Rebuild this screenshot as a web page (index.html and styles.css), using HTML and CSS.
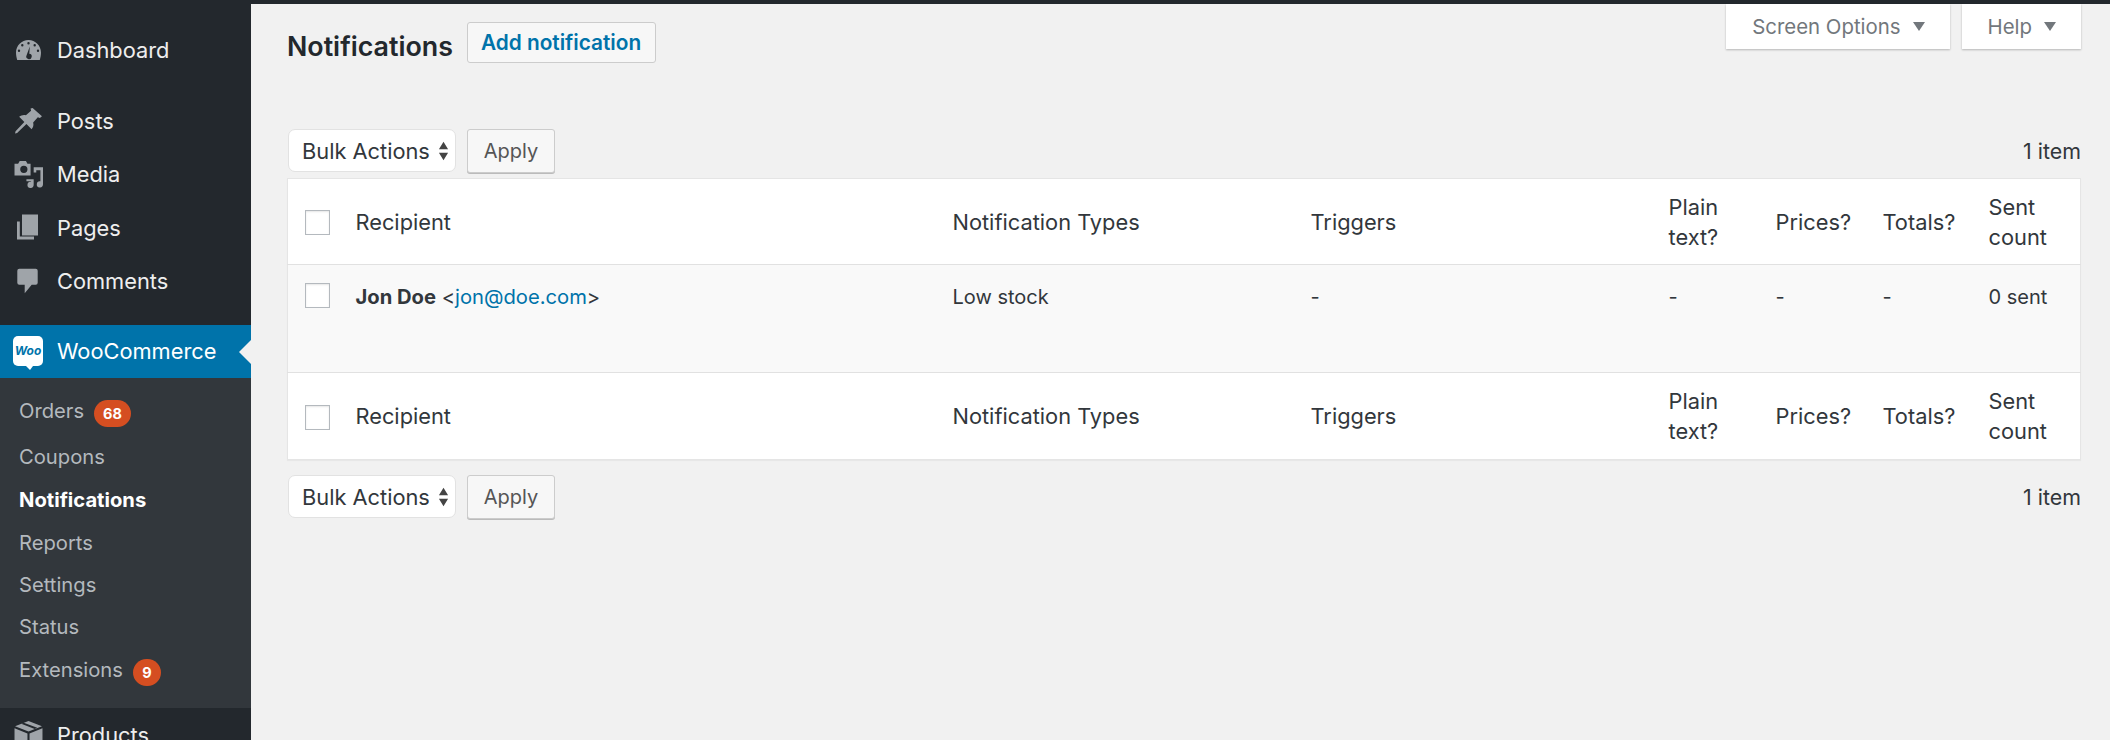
FILE: index.html
```html
<!DOCTYPE html>
<html lang="en">
<head>
<meta charset="utf-8">
<title>Notifications</title>
<link rel="stylesheet" href="styles.css">
</head>
<body>
<div class="topbar"></div>
<div class="layout">
  <nav class="sidebar">
    <a class="menu-item first">
      <svg class="icon" viewBox="0 0 29 29"><path fill-rule="evenodd" d="M14.500 5C7.600 5 2 10.600 2 17.500c0 2.600.6 5.500 1.200 7.500h22.600c.6-2 1.200-4.900 1.200-7.500C27 10.600 21.400 5 14.500 5zM14.500 7a1.200 1.200 0 1 1 0 2.400 1.200 1.200 0 0 1 0-2.400zM8.300 9a1.200 1.200 0 1 1 0 2.400 1.200 1.200 0 0 1 0-2.400zM20.700 9a1.200 1.200 0 1 1 0 2.400 1.200 1.200 0 0 1 0-2.400zM5 14.500a1.200 1.200 0 1 1 0 2.400 1.200 1.200 0 0 1 0-2.400zM24 14.500a1.200 1.200 0 1 1 0 2.400 1.200 1.200 0 0 1 0-2.400zM15.800 11.500l-.5 7.300a2.700 2.700 0 1 1-2.700 1.500z"/></svg>
      <span>Dashboard</span>
    </a>
    <a class="menu-item group">
      <svg class="icon" viewBox="0 0 28 28"><path d="M18 1l9 8-2 1.500-2-.5-4.500 5c.7 2.500 0 4.700-1.500 6.500l-5-5-9 8.500-2 .5.500-2 8.500-9-5-5c2-1.500 4.200-2.200 6.500-1.500l5-4.500-.5-2z"/></svg>
      <span>Posts</span>
    </a>
    <a class="menu-item">
      <svg class="icon" viewBox="0 0 28 28"><path fill-rule="evenodd" d="M5.500 1h6l1.500 2.500h3v11.500H0.500V3.500h3.500zM9.500 5.500a3.500 3.500 0 1 0 0 7 3.500 3.500 0 0 0 0-7zM19 7h9v16.500a3 3 0 1 1-2.500-3V10h-4v2H19zM12 18.500h7v5.500a3 3 0 1 1-2.500-3v-.5h-4.500z"/></svg>
      <span>Media</span>
    </a>
    <a class="menu-item">
      <svg class="icon" viewBox="0 0 29 29"><path d="M8 1.500h16v21H8zM3 8.500h2.800v15H20v3H3z"/></svg>
      <span>Pages</span>
    </a>
    <a class="menu-item">
      <svg class="icon" viewBox="0 0 29 29"><path d="M5.300 1.800h16.400a2 2 0 0 1 2 2v12a2 2 0 0 1-2 2h-4l-7 8.500v-8.500H5.300a2 2 0 0 1-2-2v-12a2 2 0 0 1 2-2z"/></svg>
      <span>Comments</span>
    </a>
    <a class="menu-item current">
      <span class="woo-logo">Woo</span>
      <span>WooCommerce</span>
    </a>
    <ul class="submenu">
      <li class="orders">Orders <span class="badge">68</span></li>
      <li class="coupons">Coupons</li>
      <li class="active">Notifications</li>
      <li>Reports</li>
      <li>Settings</li>
      <li>Status</li>
      <li>Extensions <span class="badge">9</span></li>
    </ul>
    <a class="menu-item products">
      <svg class="icon" viewBox="0 0 28 28"><path fill-rule="evenodd" d="M14 1l13 5-13 5L1 6zM.500 8l12.500 5v14L.500 22zM27.500 8v14L15 27V13z"/><path class="box-tape" d="M7 3.600l13 5 2.400-1-13-5z"/></svg>
      <span>Products</span>
    </a>
  </nav>
  <main class="content">
    <header class="page-head">
      <div class="title-wrap">
        <h1>Notifications</h1>
        <a class="add-btn">Add notification</a>
      </div>
      <div class="tabs">
        <div class="tab">Screen Options <i class="caret"></i></div>
        <div class="tab">Help <i class="caret"></i></div>
      </div>
    </header>

    <div class="tablenav top">
      <div class="bulk">Bulk Actions
        <svg class="updown" viewBox="0 0 12 20"><path d="M6 0l5 8H1zM6 20l-5-8h10z"/></svg>
      </div>
      <button class="apply">Apply</button>
      <span class="count">1 item</span>
    </div>

    <table class="list">
      <colgroup>
        <col class="c-check"><col class="c-recipient"><col class="c-types"><col class="c-triggers"><col class="c-plain"><col class="c-prices"><col class="c-totals"><col class="c-sent">
      </colgroup>
      <thead>
        <tr>
          <td class="check"><input type="checkbox"></td>
          <th>Recipient</th><th>Notification Types</th><th>Triggers</th><th>Plain text?</th><th>Prices?</th><th>Totals?</th><th>Sent count</th>
        </tr>
      </thead>
      <tbody>
        <tr>
          <td class="check"><input type="checkbox"></td>
          <td class="recipient"><strong>Jon Doe</strong> &lt;<a class="link">jon@doe.com</a>&gt;</td>
          <td>Low stock</td><td>-</td><td>-</td><td>-</td><td>-</td><td>0 sent</td>
        </tr>
      </tbody>
      <tfoot>
        <tr>
          <td class="check"><input type="checkbox"></td>
          <th>Recipient</th><th>Notification Types</th><th>Triggers</th><th>Plain text?</th><th>Prices?</th><th>Totals?</th><th>Sent count</th>
        </tr>
      </tfoot>
    </table>

    <div class="tablenav bottom">
      <div class="bulk">Bulk Actions
        <svg class="updown" viewBox="0 0 12 20"><path d="M6 0l5 8H1zM6 20l-5-8h10z"/></svg>
      </div>
      <button class="apply">Apply</button>
      <span class="count">1 item</span>
    </div>
  </main>
</div>
</body>
</html>
```
FILE: styles.css
```css
* { box-sizing: border-box; }
html, body { margin: 0; height: 740px; overflow: hidden; }
body {
  background: #f1f1f1;
  color: #32373c;
  font-family: Inter, "Liberation Sans", sans-serif;
  font-size: 20px;
}
.topbar { height: 4px; background: #23282d; }
.layout { display: flex; height: 736px; }

.sidebar {
  width: 251px;
  flex: none;
  background: #23282d;
  color: #eee;
  display: flex;
  flex-direction: column;
  overflow: hidden;
}
.menu-item {
  display: flex;
  align-items: center;
  height: 53.4px;
  flex: none;
  gap: 14px;
  padding-left: 14px;
  font-size: 21.8px;
  position: relative;
}
.menu-item.first { margin-top: 19px; }
.menu-item.group { margin-top: 18px; }
.icon { width: 29px; height: 29px; fill: #9fa4a9; flex: none; }
.box-tape { fill: #23282d; }
.menu-item.current {
  height: 53px;
  margin-top: 17px;
  background: #0073aa;
  color: #fff;
}
.menu-item.current::after {
  content: "";
  position: absolute;
  right: 0;
  top: 15px;
  border: 12px solid transparent;
  border-left-width: 0;
  border-right-color: #f1f1f1;
}
.woo-logo {
  width: 30px;
  height: 30px;
  margin: 0 0 0 -1px;
  flex: none;
  background: #fff;
  border-radius: 5px;
  color: #0073aa;
  font-size: 12px;
  font-weight: 700;
  font-style: italic;
  line-height: 29px;
  text-align: center;
  position: relative;
}
.woo-logo::after {
  content: "";
  position: absolute;
  left: 13px;
  bottom: -4px;
  border: 3px solid transparent;
  border-top: 4px solid #fff;
  border-bottom-width: 0;
  border-left-width: 4px;
}
.submenu {
  list-style: none;
  margin: 0;
  padding: 10px 0 17.5px 19px;
  background: #32373c;
  color: #b4b9be;
  font-size: 20.2px;
  flex: none;
}
.submenu li {
  height: 42.4px;
  display: flex;
  align-items: center;
  gap: 10px;
}
.submenu li.orders { height: 46px; }
.submenu li.coupons { height: 44.5px; }
.submenu li.active { color: #fff; font-weight: 700; }
.badge {
  background: #d54e21;
  color: #fff;
  border-radius: 14px;
  height: 27px;
  min-width: 28px;
  padding: 0 9px;
  font-size: 14.5px;
  font-weight: 700;
  line-height: 27px;
  text-align: center;
  margin-top: 6px;
}

.content { flex: 1; min-width: 0; padding: 0 29px 0 36px; }
.page-head { display: flex; justify-content: space-between; align-items: flex-start; height: 58px; }
.title-wrap { display: flex; align-items: flex-start; gap: 14px; padding-top: 18px; }
h1 { margin: 9px 0 0; font-size: 26.8px; line-height: 30px; font-weight: 600; color: #23282d; }
.add-btn {
  height: 41px;
  padding: 0 14px 0 13px;
  border: 1px solid #ccc;
  border-radius: 3px;
  background: #f7f7f7;
  color: #0073aa;
  font-size: 20.8px;
  font-weight: 600;
  line-height: 40px;
}
.tabs { display: flex; gap: 12px; }
.tab {
  height: 45px;
  padding: 0 25px 0 26px;
  background: #fff;
  color: #72777c;
  box-shadow: 0 1px 2px rgba(0,0,0,.25);
  display: flex;
  align-items: center;
  gap: 12px;
  font-size: 20.4px;
}
.caret {
  width: 0; height: 0;
  border: 6px solid transparent;
  border-top: 9px solid #72777c;
  border-bottom: 0;
  margin-top: -1px;
}

.tablenav { display: flex; align-items: flex-start; gap: 11px; height: 44px; }
.tablenav.top { margin-top: 67px; }
.tablenav.bottom { margin-top: 15px; }
.bulk {
  width: 168px;
  height: 43px;
  margin-left: 1px;
  padding: 0 6px 0 13px;
  display: flex;
  align-items: center;
  justify-content: space-between;
  background: #fff;
  border: 1px solid #e2e2e2;
  border-radius: 7px;
  font-size: 21.8px;
}
.updown { width: 11px; height: 20px; fill: #444; }
.apply {
  width: 88px;
  height: 44px;
  border: 1px solid #ccc;
  border-radius: 3px;
  background: #f7f7f7;
  box-shadow: 0 1px 0 #bbb;
  color: #555;
  font: inherit;
  padding: 0;
}
.count { margin-left: auto; line-height: 44px; font-size: 21.4px; }

.list {
  width: 1794px;
  margin-top: 5px;
  table-layout: fixed;
  border-collapse: collapse;
  background: #fff;
  border: 1px solid #e5e5e5;
  box-shadow: 0 1px 1px rgba(0,0,0,.04);
}
.c-check { width: 56px; }
.c-recipient { width: 597px; }
.c-types { width: 358px; }
.c-triggers { width: 358px; }
.c-plain { width: 107px; }
.c-prices { width: 107px; }
.c-totals { width: 106px; }
.list th, .list td {
  padding: 12px;
  font-weight: 400;
  text-align: left;
  vertical-align: middle;
  line-height: 30px;
}
.list th { font-size: 21.8px; }
.list thead tr { height: 86px; }
.list tfoot tr { height: 87px; }
.list thead th, .list thead td { border-bottom: 1px solid #e1e1e1; }
.list tfoot th, .list tfoot td { border-top: 1px solid #e1e1e1; }
.list tbody tr { height: 108px; background: #f9f9f9; }
.list tbody td { vertical-align: top; padding-top: 17px; }
.list td.check { padding: 2px 0 0 17px; }
.list tbody td.check { padding-top: 18px; }
.list tbody .recipient { font-size: 20.2px; }
input[type="checkbox"] {
  appearance: none;
  display: block;
  width: 25px;
  height: 25px;
  margin: 0;
  background: #fff;
  border: 1px solid #b4b9be;
  box-shadow: inset 0 1px 2px rgba(0,0,0,.1);
}
strong { font-weight: 700; }
.link { color: #0073aa; }
```
